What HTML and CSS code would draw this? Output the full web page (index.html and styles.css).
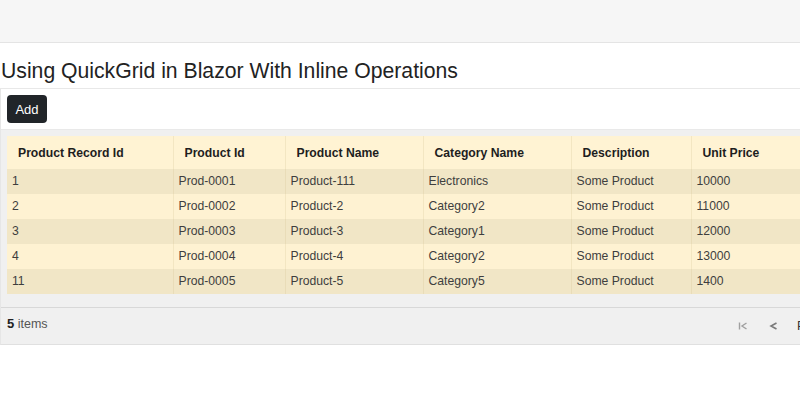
FILE: index.html
```html
<!DOCTYPE html>
<html>
<head>
<meta charset="utf-8">
<link rel="stylesheet" href="styles.css">
</head>
<body>
<div class="topbar"></div>
<h1 class="title">Using QuickGrid in Blazor With Inline Operations</h1>
<div class="grid-wrap">
  <div class="toolbar"><button class="btn-add">Add</button></div>
  <div class="grid-area">
    <table class="qgrid">
      <colgroup>
        <col class="c1"><col class="c2"><col class="c3"><col class="c4"><col class="c5"><col class="c6"><col class="c7">
      </colgroup>
      <thead>
        <tr>
          <th>Product Record Id</th>
          <th>Product Id</th>
          <th>Product Name</th>
          <th>Category Name</th>
          <th>Description</th>
          <th>Unit Price</th>
          <th></th>
        </tr>
      </thead>
      <tbody>
        <tr><td>1</td><td>Prod-0001</td><td>Product-111</td><td>Electronics</td><td>Some Product</td><td>10000</td><td></td></tr>
        <tr><td>2</td><td>Prod-0002</td><td>Product-2</td><td>Category2</td><td>Some Product</td><td>11000</td><td></td></tr>
        <tr><td>3</td><td>Prod-0003</td><td>Product-3</td><td>Category1</td><td>Some Product</td><td>12000</td><td></td></tr>
        <tr><td>4</td><td>Prod-0004</td><td>Product-4</td><td>Category2</td><td>Some Product</td><td>13000</td><td></td></tr>
        <tr><td>11</td><td>Prod-0005</td><td>Product-5</td><td>Category5</td><td>Some Product</td><td>1400</td><td></td></tr>
      </tbody>
    </table>
  </div>
  <div class="footer">
    <div class="count"><strong>5</strong> items</div>
    <div class="pager">
      <button class="pg" aria-label="First page">
        <svg width="10" height="10" viewBox="0 0 10 10"><path d="M1.5 1.5v7M8.5 2L4 5l4.5 3" fill="none" stroke="#a0a0a0" stroke-width="1.4"/></svg>
      </button>
      <button class="pg" aria-label="Previous page">
        <svg width="10" height="10" viewBox="0 0 10 10"><path d="M8.5 2L3 5l5.5 3" fill="none" stroke="#7a7a7a" stroke-width="1.6"/></svg>
      </button>
      <span class="pg-text">Page 1 of 1</span>
    </div>
  </div>
</div>
</body>
</html>
```
FILE: styles.css
```css
html, body {
  margin: 0;
  padding: 0;
  overflow: hidden;
  background: #fff;
  font-family: "Liberation Sans", Arial, sans-serif;
  color: #212529;
}

.topbar {
  height: 42px;
  background: #f6f6f6;
  border-bottom: 1px solid #e4e4e4;
}

.title {
  margin: 0;
  padding: 15px 0 0 1px;
  height: 30px;
  font-size: 21.2px;
  font-weight: normal;
  line-height: 25px;
  color: #222;
  border-bottom: 1px solid #e8e8e8;
}

.grid-wrap {
  width: 880px;
  border-left: 1px solid #e6e6e6;
  border-bottom: 1px solid #e0e0e0;
}

.toolbar {
  background: #fff;
  padding: 6px 6px;
  height: 28px;
  border-bottom: 1px solid #e9e9e9;
}

.btn-add {
  height: 28px;
  width: 40px;
  padding: 0;
  border: none;
  border-radius: 4px;
  background: #212529;
  color: #fff;
  font-family: "Liberation Sans", Arial, sans-serif;
  font-size: 13px;
}

.grid-area {
  background: #f0f0f0;
  padding: 6px 0 13px 6px;
}

.qgrid {
  border-collapse: collapse;
  table-layout: fixed;
  width: 874px;
  font-size: 12.2px;
}

.c1 { width: 166px; }
.c2 { width: 112px; }
.c3 { width: 138px; }
.c4 { width: 148px; }
.c5 { width: 120px; }
.c6 { width: 110px; }
.c7 { width: 80px; }

.qgrid th {
  box-sizing: border-box;
  height: 33px;
  padding: 0 0 0 11px;
  text-align: left;
  font-weight: bold;
  color: #1e1e1e;
  background: #fff3d3;
  border-left: 1px solid #f3e6c2;
  white-space: nowrap;
  overflow: hidden;
}

.qgrid td {
  box-sizing: border-box;
  height: 25px;
  padding: 0 0 2px 5px;
  color: #3e3e3e;
  border-left: 1px solid #e9dcb8;
  white-space: nowrap;
}

.qgrid th:first-child, .qgrid td:first-child { border-left: none; }

.qgrid tbody tr:nth-child(odd) td { background: #f1e6c6; }
.qgrid tbody tr:nth-child(even) td { background: #fef2d2; border-left-color: #f3e6c2; }

.footer {
  display: flex;
  align-items: center;
  box-sizing: border-box;
  height: 37px;
  padding: 0 0 6px 6px;
  background: #f0f0f0;
  border-top: 1px solid #d8d8d8;
  font-size: 12.5px;
  color: #555;
}

.count strong { color: #222; font-size: 13px; }

.pager {
  margin-left: auto;
  display: flex;
  align-items: center;
  width: 153px;
  padding-top: 5px;
}

.pg {
  width: 30px;
  height: 28px;
  padding: 0;
  border: none;
  background: transparent;
  display: flex;
  align-items: center;
  justify-content: center;
}

.pg-text {
  margin-left: 9px;
  color: #333;
  white-space: nowrap;
}
```
